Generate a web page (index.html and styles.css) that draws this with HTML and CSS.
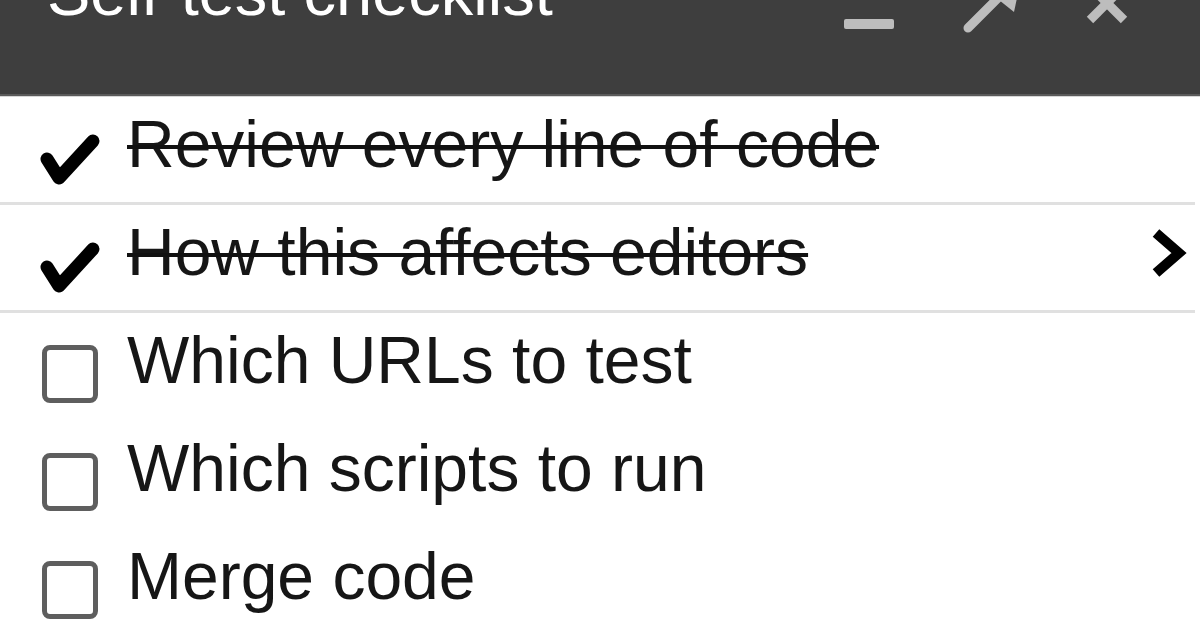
FILE: index.html
```html
<!DOCTYPE html>
<html lang="en">
<head>
    <meta charset="UTF-8">
    <meta name="viewport" content="width=device-width, initial-scale=1.0">
    <title>Self-test checklist</title>
    <link rel="stylesheet" href="styles.css">
</head>
<body>
    <div class="panel">
        <!-- 标题栏 -->
        <div class="panel-header">
            <span class="panel-title">Self-test checklist</span>
            <div class="header-actions">
                <svg class="header-icon" viewBox="0 0 60 60" width="60" height="60">
                    <rect x="5" y="29" width="50" height="10" rx="2" fill="#bdbdbd"/>
                </svg>
                <svg class="header-icon" viewBox="0 0 60 60" width="60" height="60">
                    <line x1="10" y1="38" x2="44" y2="4" stroke="#bdbdbd" stroke-width="9" stroke-linecap="round"/>
                    <polygon points="36,6 56,22 62,-6" fill="#bdbdbd"/>
                </svg>
                <svg class="header-icon" viewBox="0 0 60 60" width="60" height="60">
                    <line x1="13" y1="30" x2="47" y2="-4" stroke="#bdbdbd" stroke-width="9"/>
                    <line x1="47" y1="30" x2="13" y2="-4" stroke="#bdbdbd" stroke-width="9"/>
                </svg>
            </div>
        </div>

        <!-- 检查项列表 -->
        <ul class="checklist">
            <li class="check-row done">
                <svg class="check-mark" viewBox="0 0 60 60" width="60" height="60">
                    <polyline points="7,32 19,51 53,14" fill="none" stroke="#000" stroke-width="13" stroke-linecap="round" stroke-linejoin="round"/>
                </svg>
                <span class="check-label">Review every line of code</span>
            </li>
            <li class="check-row done">
                <svg class="check-mark" viewBox="0 0 60 60" width="60" height="60">
                    <polyline points="7,32 19,51 53,14" fill="none" stroke="#000" stroke-width="13" stroke-linecap="round" stroke-linejoin="round"/>
                </svg>
                <span class="check-label">How this affects editors</span>
                <svg class="chevron" viewBox="0 0 40 50" width="40" height="50">
                    <polyline points="8,5 31,25 8,45" fill="none" stroke="#000" stroke-width="10"/>
                </svg>
            </li>
            <li class="check-row">
                <span class="check-box"></span>
                <span class="check-label">Which URLs to test</span>
            </li>
            <li class="check-row">
                <span class="check-box"></span>
                <span class="check-label">Which scripts to run</span>
            </li>
            <li class="check-row">
                <span class="check-box"></span>
                <span class="check-label">Merge code</span>
            </li>
        </ul>
    </div>
</body>
</html>
```

FILE: styles.css
```css
/* 基础重置 */
* {
    margin: 0;
    padding: 0;
    box-sizing: border-box;
}

body {
    font-family: "Liberation Sans", Arial, sans-serif;
    background-color: #fff;
    overflow: hidden;
}

/* 标题栏（顶部被截掉一部分） */
.panel-header {
    display: flex;
    align-items: flex-start;
    height: 146px;
    margin-top: -50px;
    padding: 5px 0 0 47px;
    background-color: #3e3e3e;
    border-bottom: 2px solid #5a5a5a;
    box-shadow: 0 1px 0 #d6d6d6;
}

.panel-title {
    color: #fff;
    font-size: 65px;
    line-height: 76px;
}

.header-actions {
    display: flex;
    gap: 59px;
    margin-left: auto;
    margin-right: 63px;
    margin-top: 35px;
}

.header-icon {
    overflow: visible;
}

/* 列表 */
.checklist {
    list-style: none;
    margin-top: 1px;
    margin-right: 5px;
}

.check-row {
    display: flex;
    align-items: flex-start;
    height: 108px;
    padding: 9px 0 0 40px;
    border-bottom: 3px solid transparent;
    color: #161616;
    font-size: 66px;
    line-height: 76px;
}

.check-row.done {
    border-bottom-color: #e0e0e0;
}

.check-row.done .check-label {
    text-decoration: line-through;
    text-decoration-thickness: 4px;
    text-decoration-color: #111;
}

.check-mark {
    flex-shrink: 0;
    margin-top: 21px;
}

.check-box {
    flex-shrink: 0;
    width: 56px;
    height: 58px;
    margin: 23px 2px 0;
    border: 5px solid #5e5e5e;
    border-radius: 8px;
}

.check-label {
    margin-left: 27px;
    white-space: nowrap;
}

.chevron {
    flex-shrink: 0;
    margin-left: auto;
    margin-right: 7px;
    margin-top: 14px;
}
```
